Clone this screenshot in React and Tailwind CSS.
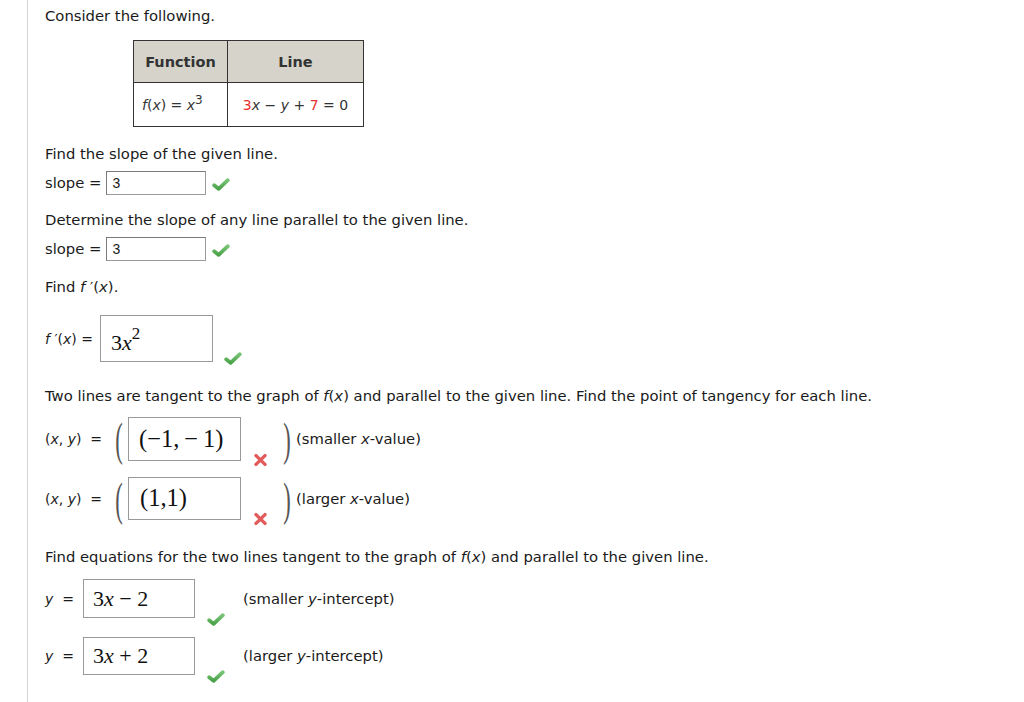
import React from "react";

const Check = () => (
  <svg width="18" height="13" viewBox="0 0 18 13" className="block">
    <defs>
      <linearGradient id="cg" x1="0" y1="0" x2="0" y2="1">
        <stop offset="0" stopColor="#78c476" />
        <stop offset="1" stopColor="#4aa348" />
      </linearGradient>
    </defs>
    <path d="M2.2 7.2 L6.6 10.8 L15.8 2.2" fill="none" stroke="url(#cg)" strokeWidth="3.8" strokeLinecap="round" strokeLinejoin="round" />
  </svg>
);

const Cross = () => (
  <svg width="15" height="14" viewBox="0 0 15 14" className="block">
    <path d="M3 2.6 L12 11.4 M12 2.6 L3 11.4" stroke="#e25a5a" strokeWidth="3.4" strokeLinecap="round" />
  </svg>
);

const Paren = ({ ch }) => (
  <span className="inline-block font-['Liberation_Serif',serif] text-[30px] leading-[30px] text-[#555] scale-y-[1.55] scale-x-[0.75]">{ch}</span>
);

const math = "font-['Liberation_Serif','DejaVu_Serif',serif] text-[22px] leading-none text-[#111]";
const mathL = "font-['Liberation_Serif','DejaVu_Serif',serif] text-[24.5px] leading-none text-[#111] whitespace-nowrap";

export default function App() {
  return (
    <div className="w-[1024px] h-[702px] bg-white pl-[27px] overflow-hidden">
      <div className="h-full border-l border-[#d4d4d4] pl-[17px] text-[14.8px] leading-[16px] text-[#1a1a1a] font-['DejaVu_Sans',Verdana,sans-serif]">
        <p className="pt-[8px]">Consider the following.</p>

        <table className="mt-[16px] ml-[88px] border-collapse text-[#333]">
          <tbody>
            <tr className="bg-[#d6d3cb]">
              <th className="w-[94px] h-[42px] border border-[#333] font-bold text-[14.5px] text-center">Function</th>
              <th className="w-[136px] h-[42px] border border-[#333] font-bold text-[14.5px] text-center">Line</th>
            </tr>
            <tr className="bg-white">
              <td className="h-[44px] border border-[#333] pl-[8px] text-[14px] whitespace-nowrap">
                <i>f</i>(<i>x</i>) = <i>x</i><sup className="text-[12px] relative -top-[6px]">3</sup>
              </td>
              <td className="h-[44px] border border-[#333] text-center text-[14px] whitespace-nowrap">
                <span className="text-[#e8302c]">3</span><i>x</i> − <i>y</i> + <span className="text-[#e8302c]">7</span> = 0
              </td>
            </tr>
          </tbody>
        </table>

        <p className="mt-[19px]">Find the slope of the given line.</p>
        <div className="mt-[9px] flex items-center">
          <span>slope =</span>
          <div className="ml-[5px] w-[100px] h-[24px] border border-[#9a9a9a] border-t-[#7a7a7a] border-l-[#7a7a7a] flex items-center pl-[5px] font-['Liberation_Sans',Arial,sans-serif] text-[14px]">3</div>
          <div className="ml-[6px] mt-[3px]"><Check /></div>
        </div>

        <p className="mt-[17px]">Determine the slope of any line parallel to the given line.</p>
        <div className="mt-[9px] flex items-center">
          <span>slope =</span>
          <div className="ml-[5px] w-[100px] h-[24px] border border-[#9a9a9a] border-t-[#7a7a7a] border-l-[#7a7a7a] flex items-center pl-[5px] font-['Liberation_Sans',Arial,sans-serif] text-[14px]">3</div>
          <div className="ml-[6px] mt-[3px]"><Check /></div>
        </div>

        <p className="mt-[18px]">Find <i>f</i> ′(<i>x</i>).</p>
        <div className="mt-[20px] flex items-center">
          <span className="text-[14px]"><i>f</i> ′(<i>x</i>) =</span>
          <div className="ml-[7px] w-[113px] h-[47px] border border-[#999] flex items-center pl-[10px] pt-[8px]">
            <span className={math}>3<i className="italic">x</i><sup className="text-[17px] relative -top-[11px]">2</sup></span>
          </div>
          <div className="ml-[11px] self-end translate-y-[3px]"><Check /></div>
        </div>

        <p className="mt-[26px]">Two lines are tangent to the graph of <i>f</i>(<i>x</i>) and parallel to the given line. Find the point of tangency for each line.</p>

        <div className="mt-[13px] flex items-center">
          <span className="w-[60px] text-[14px]">(<i>x</i>, <i>y</i>) &nbsp;=</span>
          <span className="ml-[9px]"><Paren ch="(" /></span>
          <div className="ml-[4px] w-[113px] h-[44px] border border-[#999] flex items-center pl-[10px]">
            <span className={mathL}>(−1,&thinsp;−&thinsp;1)</span>
          </div>
          <div className="ml-[12px] self-end translate-y-[6px]"><Cross /></div>
          <span className="ml-[14px]"><Paren ch=")" /></span>
          <span className="ml-[4px]">(smaller <i>x</i>-value)</span>
        </div>

        <div className="mt-[16px] flex items-center">
          <span className="w-[60px] text-[14px]">(<i>x</i>, <i>y</i>) &nbsp;=</span>
          <span className="ml-[9px]"><Paren ch="(" /></span>
          <div className="ml-[4px] w-[113px] h-[43px] border border-[#999] flex items-center pl-[11px]">
            <span className={mathL}>(1,1)</span>
          </div>
          <div className="ml-[12px] self-end translate-y-[6px]"><Cross /></div>
          <span className="ml-[14px]"><Paren ch=")" /></span>
          <span className="ml-[4px]">(larger <i>x</i>-value)</span>
        </div>

        <p className="mt-[29px]">Find equations for the two lines tangent to the graph of <i>f</i>(<i>x</i>) and parallel to the given line.</p>

        <div className="mt-[14px] flex items-center">
          <span className="w-[38px] text-[14px]"><i>y</i> &nbsp;=</span>
          <div className="w-[112px] h-[39px] border border-[#999] flex items-center pl-[9px]">
            <span className={math}>3<i className="italic">x</i> − 2</span>
          </div>
          <div className="ml-[12px] self-end translate-y-[8px]"><Check /></div>
          <span className="ml-[18px]">(smaller <i>y</i>-intercept)</span>
        </div>

        <div className="mt-[19px] flex items-center">
          <span className="w-[38px] text-[14px]"><i>y</i> &nbsp;=</span>
          <div className="w-[112px] h-[38px] border border-[#999] flex items-center pl-[9px]">
            <span className={math}>3<i className="italic">x</i> + 2</span>
          </div>
          <div className="ml-[12px] self-end translate-y-[8px]"><Check /></div>
          <span className="ml-[18px]">(larger <i>y</i>-intercept)</span>
        </div>
      </div>
    </div>
  );
}
